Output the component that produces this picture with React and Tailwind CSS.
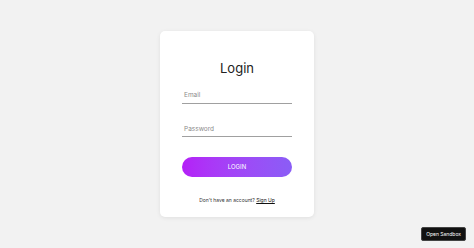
import React from 'react';

export default function App() {
    return (
        <div className="relative w-full h-[248px] bg-[#f2f2f2] flex items-start justify-center pt-[31px] font-['Inter','Liberation_Sans',sans-serif]">
            {/* Карточка логина */}
            <div className="w-[154px] h-[186px] bg-white rounded-[5px] shadow-[0_1px_4px_rgba(0,0,0,0.08)] flex flex-col items-center px-[22px]">
                <h1 className="mt-[30px] text-[13px] leading-[15px] text-[#222] font-normal">Login</h1>

                <div className="w-full mt-[15px]">
                    <div className="text-[6.5px] leading-[9px] text-[#8c8c8c] pl-[2px]">Email</div>
                    <div className="w-full h-px bg-[#a0a0a0] mt-[3px]"></div>
                </div>

                <div className="w-full mt-[21px]">
                    <div className="text-[6.5px] leading-[9px] text-[#8c8c8c] pl-[2px]">Password</div>
                    <div className="w-full h-px bg-[#a0a0a0] mt-[2px]"></div>
                </div>

                <button className="w-full h-[20px] mt-[20px] rounded-full bg-gradient-to-r from-[#b41ff7] to-[#8a5df6] text-white text-[6px] leading-[20px]">
                    LOGIN
                </button>

                <div className="mt-[19px] text-[5px] leading-[8px] text-[#333]">
                    Don't have an account? <span className="underline text-[#111]">Sign Up</span>
                </div>
            </div>

            <div className="absolute right-[8px] bottom-[7px] h-[14px] px-[4px] bg-[#111] rounded-[2px] text-white text-[5px] leading-[12px] border border-[#444]">
                Open Sandbox
            </div>
        </div>
    );
}
